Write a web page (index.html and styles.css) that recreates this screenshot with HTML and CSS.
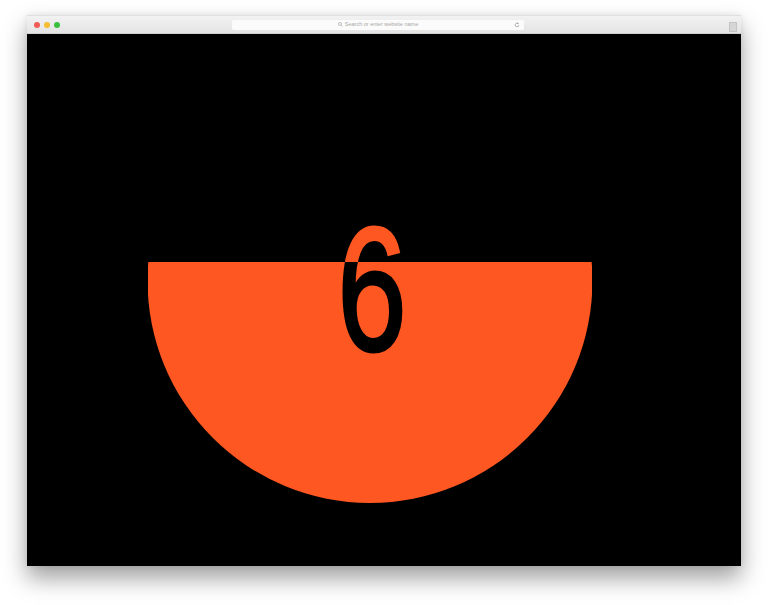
FILE: index.html
```html
<!DOCTYPE html>
<html lang="en">
<head>
<meta charset="utf-8">
<title>6</title>
<link rel="stylesheet" href="styles.css">
</head>
<body>
<div class="window">
  <div class="titlebar">
    <div class="lights">
      <span class="light red"></span>
      <span class="light yellow"></span>
      <span class="light green"></span>
    </div>
    <div class="address">
      <svg class="search-ico" viewBox="0 0 10 10" width="5" height="5"><circle cx="4" cy="4" r="3" fill="none" stroke="#9a9a9a" stroke-width="1.2"/><line x1="6.2" y1="6.2" x2="9" y2="9" stroke="#9a9a9a" stroke-width="1.2"/></svg>
      <span class="address-text">Search or enter website name</span>
      <svg class="reload-ico" viewBox="0 0 10 10" width="6" height="6"><path d="M8 5.2A3 3 0 1 1 6.6 2.4" fill="none" stroke="#8a8a8a" stroke-width="1.1"/><path d="M5.6 0.8L8 2.2L5.8 3.9Z" fill="#8a8a8a"/></svg>
    </div>
    <div class="tabbtn"></div>
  </div>
  <div class="content">
    <div class="stage">
      <div class="half"></div>
      <div class="digit digit-top">6</div>
      <div class="digit digit-low" aria-hidden="true">6</div>
    </div>
  </div>
</div>
</body>
</html>
```
FILE: styles.css
```css
html, body {
  margin: 0;
  padding: 0;
  background: #ffffff;
}
body {
  width: 768px;
  height: 605px;
  overflow: hidden;
  font-family: "Liberation Sans", Arial, sans-serif;
}
.window {
  margin: 15px 0 0 27px;
  width: 714px;
  box-shadow: 0 12px 22px rgba(0, 0, 0, 0.38), 0 0 6px rgba(0, 0, 0, 0.08);
}
.titlebar {
  height: 19px;
  box-sizing: border-box;
  background: linear-gradient(#f2f2f2, #e4e4e4);
  border-top: 1px solid #e0e0e0;
  border-bottom: 1px solid #cfcfcf;
  display: flex;
  align-items: center;
  padding: 0 4px 0 7px;
}
.lights {
  display: flex;
  gap: 4px;
}
.light {
  width: 6px;
  height: 6px;
  border-radius: 50%;
  display: block;
}
.red { background: #f25c54; }
.yellow { background: #f5bd2f; }
.green { background: #3ac03f; }
.address {
  margin-left: 172px;
  width: 292px;
  height: 10px;
  background: #fbfbfb;
  border-radius: 2px;
  display: flex;
  align-items: center;
  justify-content: center;
  gap: 2px;
  position: relative;
}
.address-text {
  font-size: 5.5px;
  color: #a8a8a8;
  line-height: 1;
}
.reload-ico {
  position: absolute;
  right: 4px;
  top: 2px;
}
.tabbtn {
  margin-left: auto;
  width: 8px;
  height: 10px;
  margin-top: 5px;
  background: #d6d6d6;
  border: 1px solid #c4c4c4;
  box-sizing: border-box;
}
.content {
  height: 532px;
  background: #000000;
  padding-left: 121px;
  padding-top: 167px;
  box-sizing: border-box;
}
.stage {
  display: grid;
  width: 444px;
}
.half {
  grid-area: 1 / 1;
  margin-top: 61px;
  width: 444px;
  height: 241px;
  background: #ff5722;
  clip-path: circle(222.5px at 50% 18.5px);
}
.digit {
  grid-area: 1 / 1;
  justify-self: center;
  align-self: start;
  font-family: "Liberation Sans", Arial, sans-serif;
  font-size: 176px;
  line-height: 176px;
  height: 176px;
  margin-left: 3px;
  transform: scaleX(0.71);
}
.digit-top {
  color: #ff5722;
  -webkit-text-stroke: 3px #ff5722;
}
.digit-low {
  color: #000000;
  -webkit-text-stroke: 3px #000000;
  clip-path: inset(61px 0 0 0);
}
```
